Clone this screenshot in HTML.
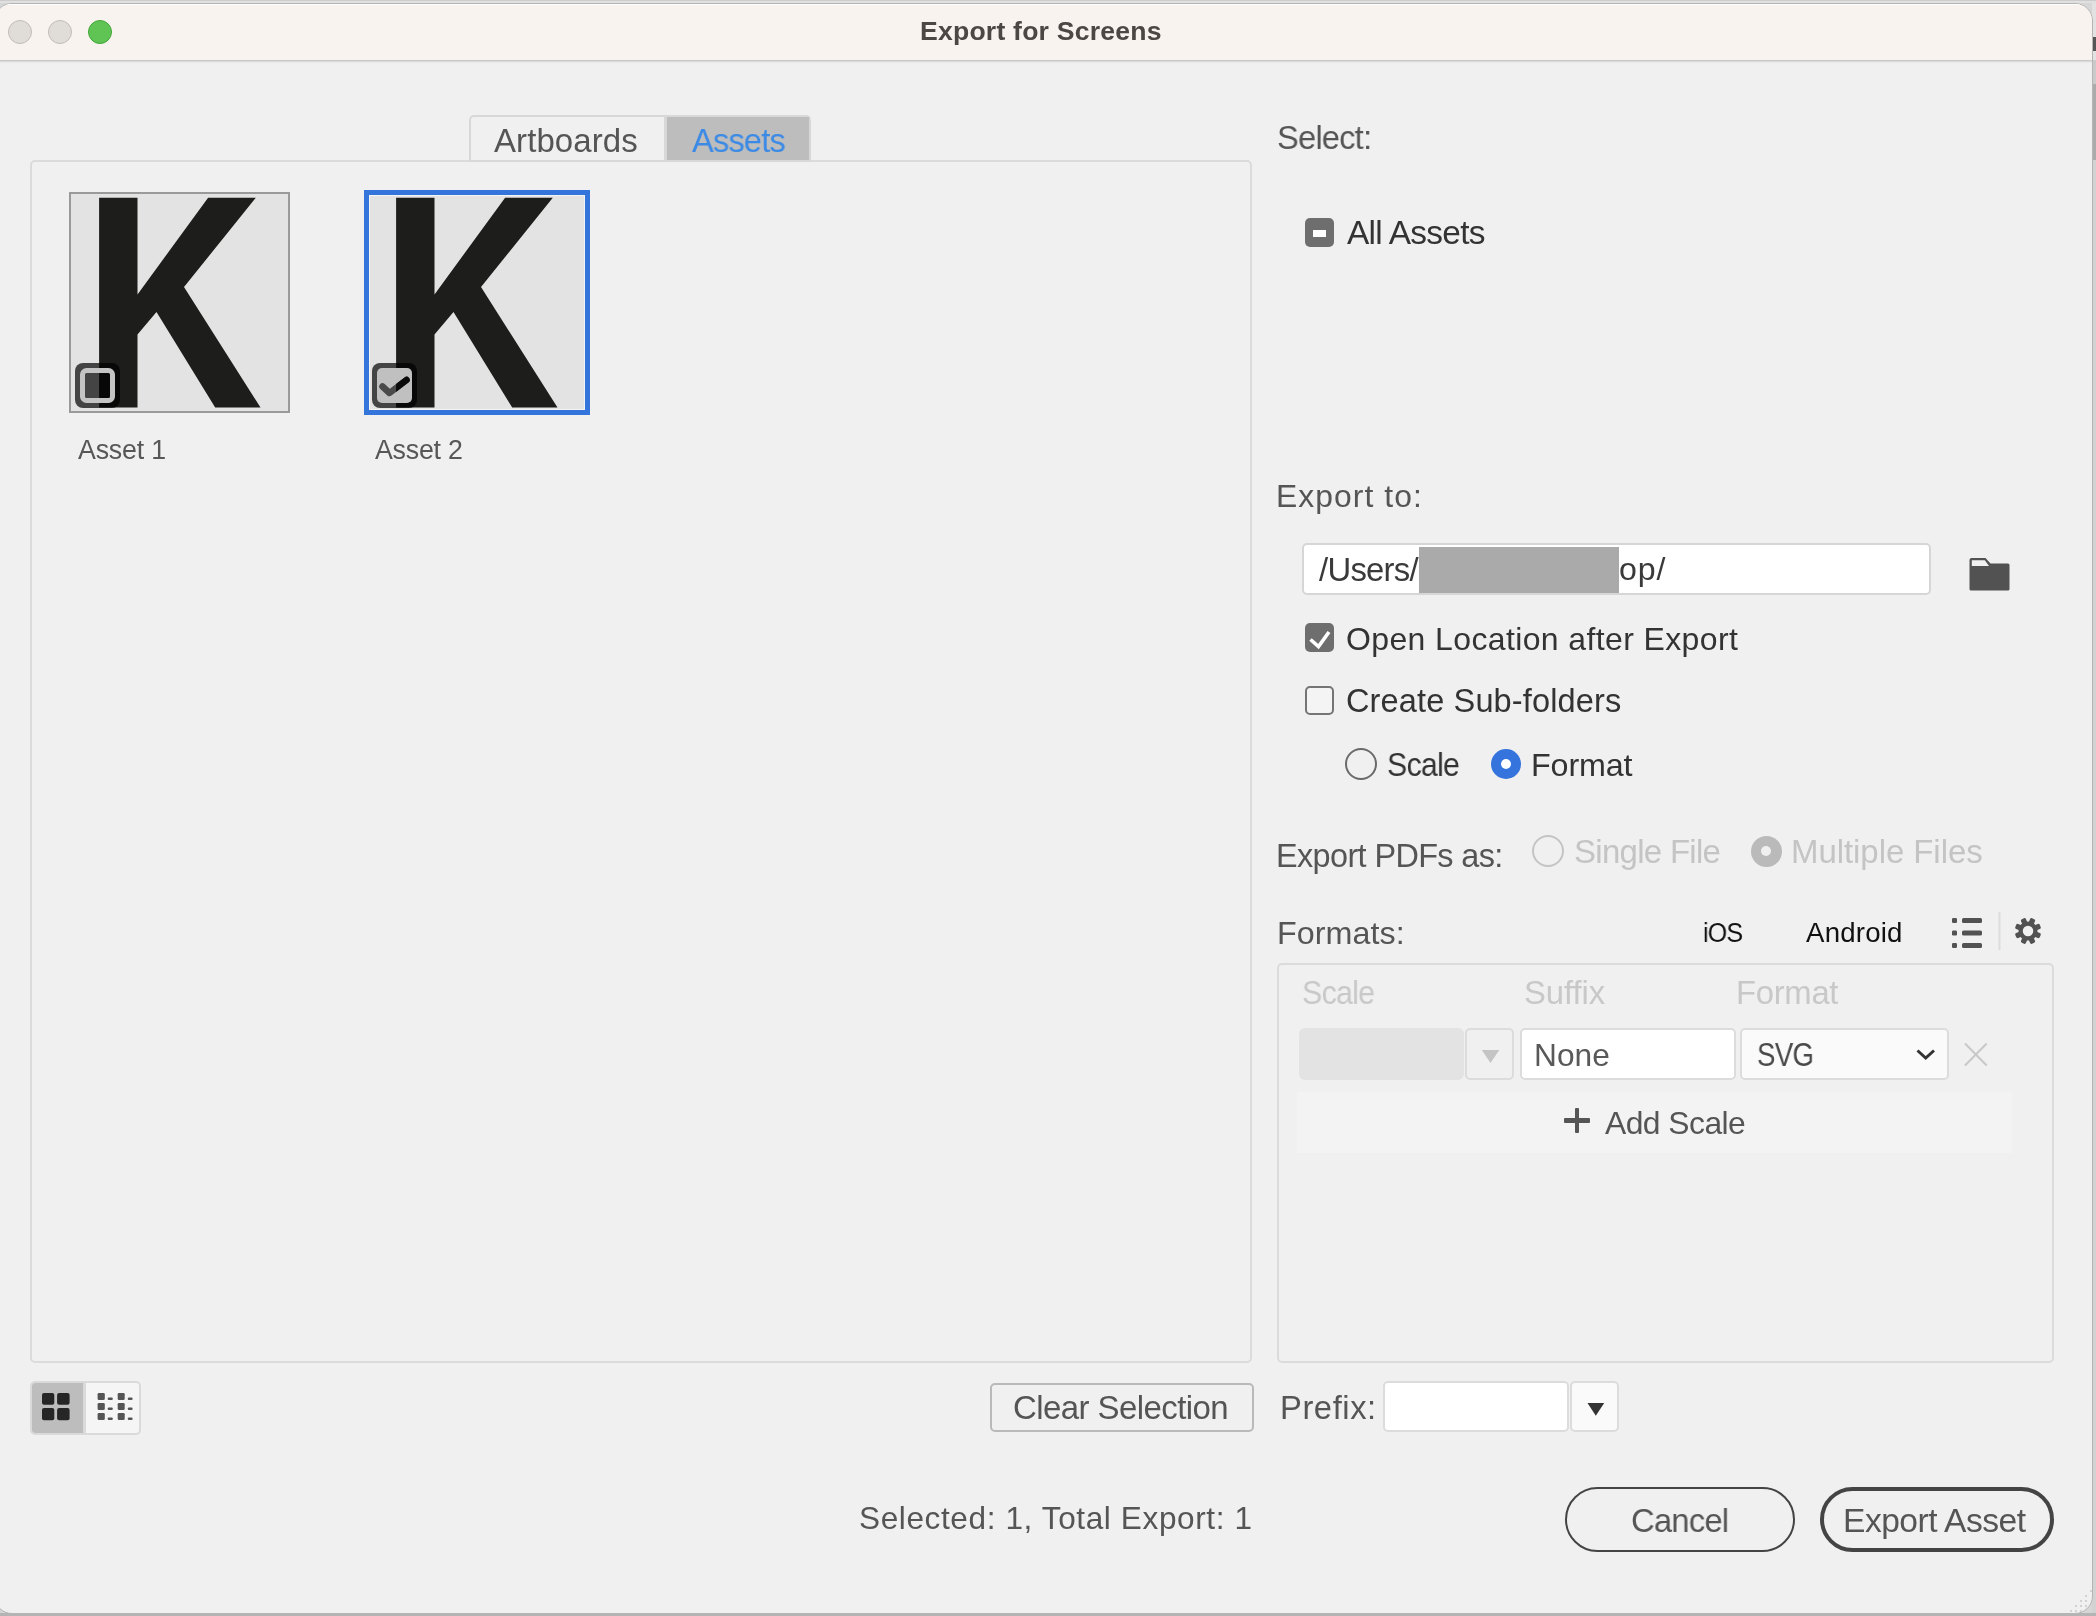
<!DOCTYPE html>
<html><head><meta charset="utf-8"><style>
html,body{margin:0;padding:0;}
body{width:2096px;height:1616px;position:relative;overflow:hidden;background:#e2e2e2;font-family:"Liberation Sans",sans-serif;}
.a{position:absolute;box-sizing:border-box;}
.t{position:absolute;white-space:pre;font-family:"Liberation Sans",sans-serif;will-change:transform;}
</style></head><body>
<!-- outside/background -->
<div class="a" style="left:0;top:0;width:2096px;height:1616px;background:#d6d6d6"></div>
<div class="a" style="left:0;top:0;width:2096px;height:1px;background:#cccccc"></div>
<div class="a" style="left:0;top:1px;width:2096px;height:2px;background:#e0e0e0"></div>
<div class="a" style="left:2092px;top:3px;width:4px;height:57px;background:#e2e2e2"></div>
<div class="a" style="left:2092px;top:60px;width:4px;height:24px;background:#cacaca"></div>
<div class="a" style="left:2092px;top:84px;width:4px;height:76px;background:#ababab"></div>
<div class="a" style="left:2092px;top:160px;width:4px;height:1456px;background:#d2d2d2"></div>
<div class="a" style="left:2092px;top:37px;width:4px;height:14px;background:#555"></div>
<div class="a" style="left:0;top:1613px;width:2096px;height:3px;background:#b4b4b4"></div>
<!-- window -->
<div class="a" style="left:-6px;top:3px;width:2099px;height:1611px;background:#f0f0f0;border-radius:18px;border:1px solid #b4b4b4;overflow:hidden">
  <div class="a" style="left:0;top:0;width:2101px;height:57px;background:#f8f3ef;border-top:1px solid #fefefe;border-bottom:1px solid #c8c8c8"></div>
  <div class="a" style="left:0;top:57px;width:2101px;height:1px;background:#dcdcdc"></div>
  <div class="a" style="left:0;top:58px;width:2101px;height:1px;background:#e9e9e9"></div>
</div>
<!-- traffic lights -->
<div class="a" style="left:8px;top:20px;width:24px;height:24px;border-radius:50%;background:#e0dcd8;border:1px solid #c2bcb6"></div>
<div class="a" style="left:48px;top:20px;width:24px;height:24px;border-radius:50%;background:#e0dcd8;border:1px solid #c2bcb6"></div>
<div class="a" style="left:88px;top:20px;width:24px;height:24px;border-radius:50%;background:#5fc454;border:1px solid #45a73a"></div>

<!-- left panel -->
<div class="a" style="left:30px;top:160px;width:1222px;height:1202.5px;border:2px solid #dbdbdb;border-radius:5px"></div>
<!-- tabs -->
<div class="a" style="left:469px;top:115px;width:342px;height:47px;border:2px solid #d8d8d8;border-bottom:none;border-radius:5px 5px 0 0;background:#f0f0f0"></div>
<div class="a" style="left:664px;top:117px;width:3px;height:45px;background:#d8d8d8"></div>
<div class="a" style="left:667px;top:117px;width:142px;height:45px;background:#bdbdbd"></div>
<div class="a" style="left:471px;top:160px;width:338px;height:2px;background:#d8d8d8"></div>

<!-- asset 1 -->
<div class="a" style="left:69px;top:192px;width:221px;height:221px;border:2.5px solid #9a9a9a;background:#e3e3e3"></div>
<!-- asset 2 box -->
<div class="a" style="left:364px;top:190px;width:226px;height:225px;border:5px solid #3375db;"></div>
<div class="a" style="left:369px;top:195px;width:216px;height:215px;border:1px solid #f4f4f4;background:#e3e3e3"></div>
<svg class="a" style="left:0;top:0" width="700" height="500" viewBox="0 0 700 500">
  <polygon fill="#1d1d1b" points="99.1,197.8 137.5,197.8 137.5,294.4 208.1,197.8 255.8,197.8 184,287 260.5,407.5 215.2,407.5 156.5,311.9 137.5,334.5 137.5,407.5 99.1,407.5"/>
  <g transform="translate(297,0)">
  <polygon fill="#1d1d1b" points="99.1,197.8 137.5,197.8 137.5,294.4 208.1,197.8 255.8,197.8 184,287 260.5,407.5 215.2,407.5 156.5,311.9 137.5,334.5 137.5,407.5 99.1,407.5"/>
  </g>
</svg>
<!-- checkbox overlays -->
<svg class="a" style="left:0;top:0" width="700" height="500" viewBox="0 0 700 500">
  <defs>
    <clipPath id="stem1"><rect x="99.1" y="0" width="38.4" height="500"/></clipPath>
    <clipPath id="stem2"><rect x="396.1" y="0" width="38.7" height="500"/></clipPath>
  </defs>
  <rect x="75" y="363" width="45" height="45" rx="8" fill="rgba(0,0,0,0.7)"/>
  <rect x="82.5" y="370.5" width="30" height="30" rx="4" fill="none" stroke="#c4c4c4" stroke-width="5"/>
  <rect x="372" y="363" width="45" height="45" rx="8" fill="rgba(0,0,0,0.7)"/>
  <rect x="377" y="368" width="35" height="35" rx="5" fill="#c0c0c0"/>
  <polyline points="382.5,386.5 389.5,393 406.5,380" fill="none" stroke="#4a4a4a" stroke-width="6.5" stroke-linecap="round" stroke-linejoin="round"/>
  <polyline clip-path="url(#stem2)" points="382.5,386.5 389.5,393 406.5,380" fill="none" stroke="#0a0a0a" stroke-width="6.5" stroke-linecap="round" stroke-linejoin="round"/>
</svg>

<!-- right: All assets checkbox -->
<div class="a" style="left:1305px;top:218px;width:29px;height:29px;border-radius:5px;background:#6e6e6e"></div>
<div class="a" style="left:1313px;top:230px;width:13px;height:7px;background:#fff"></div>

<!-- path input -->
<div class="a" style="left:1302px;top:543px;width:629px;height:52px;border:2px solid #d6d6d6;border-radius:5px;background:#fff"></div>
<!-- folder -->
<svg class="a" style="left:1960px;top:550px" width="60" height="50" viewBox="1960 550 60 50">
  <path fill="#525252" d="M1971.5,558 L1985.5,558 L1990.5,563.4 L2008,563.4 Q2009.5,563.4 2009.5,565 L2009.5,589 Q2009.5,590.5 2008,590.5 L1971,590.5 Q1969.5,590.5 1969.5,589 L1969.5,560 Q1969.5,558 1971.5,558 Z M1971.8,560.2 L1971.8,566 L1989,566 L1984.8,560.2 Z"/>
</svg>

<!-- open location checkbox -->
<div class="a" style="left:1305px;top:623px;width:29px;height:29px;border-radius:5px;background:#6e6e6e"></div>
<svg class="a" style="left:1300px;top:618px" width="40" height="40" viewBox="1300 618 40 40">
  <polyline points="1310.5,639.5 1318.5,646.5 1329,632" fill="none" stroke="#fff" stroke-width="3.6" stroke-linecap="butt" stroke-linejoin="miter"/>
</svg>
<!-- create subfolders checkbox -->
<div class="a" style="left:1305px;top:685.5px;width:29px;height:29px;border-radius:5px;border:2px solid #757575;background:#f4f4f4"></div>

<!-- radios -->
<div class="a" style="left:1344.7px;top:748px;width:32px;height:32px;border-radius:50%;border:2.5px solid #6a6a6a"></div>
<div class="a" style="left:1491px;top:748.8px;width:30px;height:30px;border-radius:50%;background:#3574dc"></div>
<div class="a" style="left:1501px;top:758.8px;width:10px;height:10px;border-radius:50%;background:#fff"></div>

<!-- export pdfs radios -->
<div class="a" style="left:1532px;top:835px;width:32px;height:32px;border-radius:50%;border:2.5px solid #c4c4c4"></div>
<div class="a" style="left:1750.5px;top:835.5px;width:31px;height:31px;border-radius:50%;background:#bababa"></div>
<div class="a" style="left:1761px;top:846px;width:10px;height:10px;border-radius:50%;background:#f0f0f0"></div>

<!-- formats icons -->
<svg class="a" style="left:1940px;top:905px" width="120" height="55" viewBox="1940 905 120 55">
  <rect x="1952" y="918" width="5" height="5" rx="1.3" fill="#525252"/>
  <rect x="1962" y="918" width="20" height="5" rx="1.5" fill="#525252"/>
  <rect x="1952" y="930.5" width="5" height="5" rx="1.3" fill="#525252"/>
  <rect x="1962" y="930.5" width="20" height="5" rx="1.5" fill="#525252"/>
  <rect x="1952" y="943" width="5" height="5" rx="1.3" fill="#525252"/>
  <rect x="1962" y="943" width="20" height="5" rx="1.5" fill="#525252"/>
  <rect x="1998.5" y="912" width="2" height="38" fill="#dcdcdc"/>
  <g id="gear"></g>
</svg>
<svg class="a" style="left:2010px;top:913.3px" width="36" height="36" viewBox="-18 -18 36 36">
  <circle cx="0" cy="0" r="7.4" fill="none" stroke="#525252" stroke-width="4.3"/>
  <rect x="-2.7" y="-13.3" width="5.4" height="6" rx="1.6" fill="#525252" transform="rotate(22.5)"/>
  <rect x="-2.7" y="-13.3" width="5.4" height="6" rx="1.6" fill="#525252" transform="rotate(67.5)"/>
  <rect x="-2.7" y="-13.3" width="5.4" height="6" rx="1.6" fill="#525252" transform="rotate(112.5)"/>
  <rect x="-2.7" y="-13.3" width="5.4" height="6" rx="1.6" fill="#525252" transform="rotate(157.5)"/>
  <rect x="-2.7" y="-13.3" width="5.4" height="6" rx="1.6" fill="#525252" transform="rotate(202.5)"/>
  <rect x="-2.7" y="-13.3" width="5.4" height="6" rx="1.6" fill="#525252" transform="rotate(247.5)"/>
  <rect x="-2.7" y="-13.3" width="5.4" height="6" rx="1.6" fill="#525252" transform="rotate(292.5)"/>
  <rect x="-2.7" y="-13.3" width="5.4" height="6" rx="1.6" fill="#525252" transform="rotate(337.5)"/>
</svg>

<!-- formats panel -->
<div class="a" style="left:1277px;top:963px;width:777px;height:399.5px;border:2px solid #dbdbdb;border-radius:5px"></div>
<div class="a" style="left:1299px;top:1027.5px;width:165px;height:52.5px;border-radius:6px;background:#e3e3e3"></div>
<div class="a" style="left:1464.5px;top:1028px;width:49.5px;height:51.5px;border:2px solid #dcdcdc;border-radius:5px;background:#f0f0f0"></div>
<svg class="a" style="left:1480px;top:1048px" width="22" height="18" viewBox="1480 1048 22 18"><polygon points="1481.8,1050 1499.3,1050 1490.5,1063.1" fill="#c4c4c4"/></svg>
<div class="a" style="left:1520px;top:1028px;width:216px;height:51.5px;border:2px solid #dcdcdc;border-radius:5px;background:#fff"></div>
<div class="a" style="left:1740px;top:1028px;width:209px;height:51.5px;border:2px solid #dcdcdc;border-radius:5px;background:#fafafa"></div>
<svg class="a" style="left:1910px;top:1040px" width="90" height="35" viewBox="1910 1040 90 35">
  <polyline points="1917.5,1050.5 1925.7,1058 1934,1050.5" fill="none" stroke="#333" stroke-width="3"/>
  <line x1="1965" y1="1043.5" x2="1986.7" y2="1065.5" stroke="#c8c8c8" stroke-width="2"/>
  <line x1="1986.7" y1="1043.5" x2="1965" y2="1065.5" stroke="#c8c8c8" stroke-width="2"/>
</svg>
<!-- add scale row -->
<div class="a" style="left:1297px;top:1092px;width:715px;height:60.5px;background:#f3f3f3"></div>
<div class="a" style="left:1564px;top:1118px;width:25.5px;height:4.5px;background:#555;border-radius:1px"></div>
<div class="a" style="left:1574.5px;top:1107.5px;width:4.5px;height:25.5px;background:#555;border-radius:1px"></div>

<!-- bottom left icons -->
<div class="a" style="left:30px;top:1380.5px;width:111px;height:54px;border:2px solid #dadada;border-radius:5px;background:#f5f5f5"></div>
<div class="a" style="left:32px;top:1382.5px;width:51px;height:50px;background:#bdbdbd;border-radius:3px 0 0 3px"></div>
<div class="a" style="left:83px;top:1382.5px;width:2.5px;height:50px;background:#dadada"></div>
<svg class="a" style="left:30px;top:1380px" width="112" height="56" viewBox="30 1380 112 56">
  <rect x="42" y="1393" width="12.3" height="11.8" rx="2" fill="#262626"/>
  <rect x="57.1" y="1393" width="12.5" height="11.8" rx="2" fill="#262626"/>
  <rect x="42" y="1408" width="12.3" height="12.3" rx="2" fill="#262626"/>
  <rect x="57.1" y="1408" width="12.5" height="12.3" rx="2" fill="#262626"/>
  <rect x="97.6" y="1393" width="7.2" height="7" rx="1.3" fill="#555"/>
  <rect x="117.7" y="1393" width="7" height="7" rx="1.3" fill="#555"/>
  <rect x="97.6" y="1403" width="7.2" height="7" rx="1.3" fill="#555"/>
  <rect x="117.7" y="1403" width="7" height="7" rx="1.3" fill="#555"/>
  <rect x="97.6" y="1413" width="7.2" height="7" rx="1.3" fill="#555"/>
  <rect x="117.7" y="1413" width="7" height="7" rx="1.3" fill="#555"/>
  <rect x="107.8" y="1397.5" width="4.9" height="2.5" rx="0.8" fill="#555"/>
  <rect x="127.9" y="1397.5" width="4.6" height="2.5" rx="0.8" fill="#555"/>
  <rect x="107.8" y="1407.5" width="4.9" height="2.5" rx="0.8" fill="#555"/>
  <rect x="127.9" y="1407.5" width="4.6" height="2.5" rx="0.8" fill="#555"/>
  <rect x="107.8" y="1417.5" width="4.9" height="2.5" rx="0.8" fill="#555"/>
  <rect x="127.9" y="1417.5" width="4.6" height="2.5" rx="0.8" fill="#555"/>
</svg>

<!-- clear selection -->
<div class="a" style="left:990px;top:1383px;width:264px;height:48.5px;border:2px solid #b9b9b9;border-radius:5px"></div>
<!-- prefix -->
<div class="a" style="left:1383px;top:1381px;width:185.5px;height:50.5px;border:2px solid #dcdcdc;border-radius:5px;background:#fff"></div>
<div class="a" style="left:1570px;top:1381px;width:48.5px;height:50.5px;border:2px solid #dcdcdc;border-radius:5px;background:#fafafa"></div>
<svg class="a" style="left:1580px;top:1398px" width="30" height="22" viewBox="1580 1398 30 22"><polygon points="1587.5,1403 1604.2,1403 1595.8,1415.8" fill="#333"/></svg>

<!-- cancel / export -->
<div class="a" style="left:1564.5px;top:1487.3px;width:230px;height:65px;border:2.2px solid #444;border-radius:33px"></div>
<div class="a" style="left:1819.5px;top:1487.3px;width:234.5px;height:65px;border:4.5px solid #444;border-radius:33px"></div>
<!-- redaction -->
<div class="a" style="left:1419.2px;top:547px;width:199.7px;height:45.7px;background:#aaaaaa;z-index:5"></div>

<!-- resize grip -->
<div class="a" style="left:2089.6px;top:1590.3px;width:2px;height:2px;background:#d2d2d2"></div>
<div class="a" style="left:2085.0px;top:1595.0px;width:2px;height:2px;background:#d2d2d2"></div>
<div class="a" style="left:2079.9px;top:1600.0px;width:2px;height:2px;background:#d2d2d2"></div>
<div class="a" style="left:2084.5px;top:1600.0px;width:2px;height:2px;background:#d2d2d2"></div>
<div class="a" style="left:2074.7px;top:1605.2px;width:2px;height:2px;background:#d2d2d2"></div>
<div class="a" style="left:2079.9px;top:1605.2px;width:2px;height:2px;background:#d2d2d2"></div>
<div class="a" style="left:2084.5px;top:1605.2px;width:2px;height:2px;background:#d2d2d2"></div>
<div class="a" style="left:2069.6px;top:1609.8px;width:2px;height:2px;background:#d2d2d2"></div>
<div class="a" style="left:2074.7px;top:1609.8px;width:2px;height:2px;background:#d2d2d2"></div>
<div class="a" style="left:2079.9px;top:1609.8px;width:2px;height:2px;background:#d2d2d2"></div>

<div class="t" style="left:919.5px;top:17.8px;font-size:26.60px;line-height:26.60px;letter-spacing:0.21px;color:#4b4745;font-weight:bold;">Export for Screens</div>
<div class="t" style="left:494.3px;top:123.9px;font-size:32.99px;line-height:32.99px;letter-spacing:0.09px;color:#555555;">Artboards</div>
<div class="t" style="left:692.0px;top:123.9px;font-size:32.99px;line-height:32.99px;letter-spacing:-0.80px;color:#3b8ae6;transform:scaleX(0.9865);transform-origin:0 0;">Assets</div>
<div class="t" style="left:77.6px;top:437.0px;font-size:26.74px;line-height:26.74px;letter-spacing:-0.18px;color:#575757;">Asset 1</div>
<div class="t" style="left:375.0px;top:437.0px;font-size:26.74px;line-height:26.74px;letter-spacing:-0.22px;color:#575757;">Asset 2</div>
<div class="t" style="left:1276.7px;top:121.2px;font-size:33.72px;line-height:33.72px;letter-spacing:-0.80px;color:#555555;transform:scaleX(0.9672);transform-origin:0 0;">Select:</div>
<div class="t" style="left:1347.4px;top:216.0px;font-size:33.43px;line-height:33.43px;letter-spacing:-0.71px;color:#333333;">All Assets</div>
<div class="t" style="left:1275.7px;top:481.3px;font-size:31.83px;line-height:31.83px;letter-spacing:1.07px;color:#555555;">Export to:</div>
<div class="t" style="left:1319.2px;top:553.8px;font-size:32.85px;line-height:32.85px;letter-spacing:-0.72px;color:#3a3a3a;">/Users/</div>
<div class="t" style="left:1619.2px;top:553.3px;font-size:32.12px;line-height:32.12px;letter-spacing:0.92px;color:#3a3a3a;">op/</div>
<div class="t" style="left:1346.4px;top:622.9px;font-size:31.98px;line-height:31.98px;letter-spacing:0.39px;color:#333333;">Open Location after Export</div>
<div class="t" style="left:1346.4px;top:685.0px;font-size:32.56px;line-height:32.56px;letter-spacing:0.12px;color:#333333;">Create Sub-folders</div>
<div class="t" style="left:1387.1px;top:748.2px;font-size:33.28px;line-height:33.28px;letter-spacing:-0.80px;color:#333333;transform:scaleX(0.9104);transform-origin:0 0;">Scale</div>
<div class="t" style="left:1531.3px;top:749.2px;font-size:32.27px;line-height:32.27px;letter-spacing:-0.12px;color:#333333;">Format</div>
<div class="t" style="left:1276.4px;top:840.2px;font-size:32.41px;line-height:32.41px;letter-spacing:-0.61px;color:#555555;">Export PDFs as:</div>
<div class="t" style="left:1574.3px;top:835.1px;font-size:32.99px;line-height:32.99px;letter-spacing:-0.71px;color:#c4c4c4;">Single File</div>
<div class="t" style="left:1790.9px;top:835.1px;font-size:32.99px;line-height:32.99px;letter-spacing:-0.06px;color:#c4c4c4;">Multiple Files</div>
<div class="t" style="left:1276.7px;top:917.0px;font-size:32.27px;line-height:32.27px;letter-spacing:0.05px;color:#555555;">Formats:</div>
<div class="t" style="left:1703.0px;top:919.1px;font-size:27.62px;line-height:27.62px;letter-spacing:-0.80px;color:#111111;transform:scaleX(0.9024);transform-origin:0 0;">iOS</div>
<div class="t" style="left:1805.8px;top:919.1px;font-size:27.62px;line-height:27.62px;letter-spacing:0.21px;color:#111111;">Android</div>
<div class="t" style="left:1301.9px;top:975.8px;font-size:33.28px;line-height:33.28px;letter-spacing:-0.80px;color:#c8c8c8;transform:scaleX(0.9130);transform-origin:0 0;">Scale</div>
<div class="t" style="left:1524.0px;top:976.8px;font-size:32.85px;line-height:32.85px;letter-spacing:-0.05px;color:#c8c8c8;">Suffix</div>
<div class="t" style="left:1735.6px;top:976.8px;font-size:32.85px;line-height:32.85px;letter-spacing:-0.30px;color:#c8c8c8;">Format</div>
<div class="t" style="left:1533.5px;top:1040.0px;font-size:31.69px;line-height:31.69px;letter-spacing:0.00px;color:#595959;">None</div>
<div class="t" style="left:1757.0px;top:1038.9px;font-size:32.56px;line-height:32.56px;letter-spacing:-0.80px;color:#4a4a4a;transform:scaleX(0.8491);transform-origin:0 0;">SVG</div>
<div class="t" style="left:1604.9px;top:1107.9px;font-size:31.83px;line-height:31.83px;letter-spacing:-0.54px;color:#555555;">Add Scale</div>
<div class="t" style="left:1013.4px;top:1391.0px;font-size:32.99px;line-height:32.99px;letter-spacing:-0.57px;color:#555555;">Clear Selection</div>
<div class="t" style="left:1279.7px;top:1392.0px;font-size:32.70px;line-height:32.70px;letter-spacing:0.59px;color:#555555;">Prefix:</div>
<div class="t" style="left:859.4px;top:1502.7px;font-size:31.54px;line-height:31.54px;letter-spacing:0.62px;color:#555555;">Selected: 1, Total Export: 1</div>
<div class="t" style="left:1630.6px;top:1504.3px;font-size:33.58px;line-height:33.58px;letter-spacing:-0.80px;color:#555555;transform:scaleX(0.9758);transform-origin:0 0;">Cancel</div>
<div class="t" style="left:1843.2px;top:1504.3px;font-size:33.58px;line-height:33.58px;letter-spacing:-0.50px;color:#555555;">Export Asset</div>
</body></html>
